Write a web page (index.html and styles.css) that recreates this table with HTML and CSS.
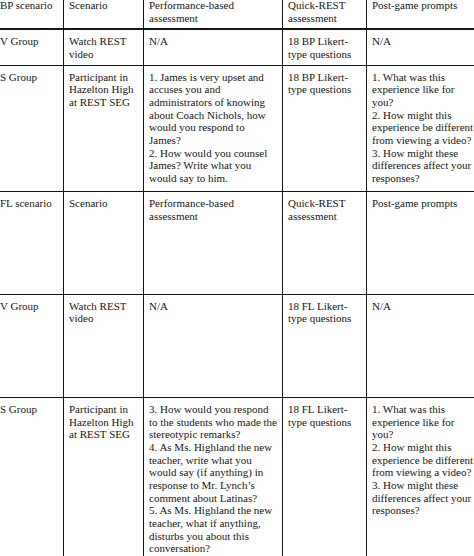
FILE: index.html
```html
<!DOCTYPE html>
<html>
<head>
<meta charset="utf-8">
<link rel="stylesheet" href="styles.css">
</head>
<body>
<div class="page">
<table class="grid">
  <colgroup>
    <col class="c1"><col class="c2"><col class="c3"><col class="c4"><col class="c5">
  </colgroup>
  <tr class="head">
    <td>BP scenario</td>
    <td>Scenario</td>
    <td>Performance-based assessment</td>
    <td>Quick-REST assessment</td>
    <td>Post-game prompts</td>
  </tr>
  <tr class="r-short">
    <td>V Group</td>
    <td>Watch REST video</td>
    <td>N/A</td>
    <td>18 BP Likert-type questions</td>
    <td>N/A</td>
  </tr>
  <tr class="r-long">
    <td>S Group</td>
    <td>Participant in Hazelton High at REST SEG</td>
    <td>1. James is very upset and accuses you and administrators of knowing about Coach Nichols, how would you respond to James?<br>2. How would you counsel James? Write what you would say to him.</td>
    <td>18 BP Likert-type questions</td>
    <td>1. What was this experience like for you?<br>2. How might this experience be different from viewing a video?<br>3. How might these differences affect your responses?</td>
  </tr>
  <tr class="r-mid">
    <td>FL scenario</td>
    <td>Scenario</td>
    <td>Performance-based assessment</td>
    <td>Quick-REST assessment</td>
    <td>Post-game prompts</td>
  </tr>
  <tr class="r-mid2">
    <td>V Group</td>
    <td>Watch REST video</td>
    <td>N/A</td>
    <td>18 FL Likert-type questions</td>
    <td>N/A</td>
  </tr>
  <tr class="r-last">
    <td>S Group</td>
    <td>Participant in Hazelton High at REST SEG</td>
    <td>3. How would you respond to the students who made the stereotypic remarks?<br>4. As Ms. Highland the new teacher, write what you would say (if anything) in response to Mr. Lynch’s comment about Latinas?<br>5. As Ms. Highland the new teacher, what if anything, disturbs you about this conversation?</td>
    <td>18 FL Likert-type questions</td>
    <td>1. What was this experience like for you?<br>2. How might this experience be different from viewing a video?<br>3. How might these differences affect your responses?</td>
  </tr>
</table>
</div>
</body>
</html>
```

FILE: styles.css
```css
html, body {
  margin: 0;
  padding: 0;
  background: #ffffff;
}

.page {
  width: 474px;
  height: 556px;
  overflow: hidden;
  position: relative;
  background: #ffffff;
}

.grid {
  border-collapse: collapse;
  table-layout: fixed;
  width: 488px;
  margin-top: -7px;
  margin-left: -6px;
  font-family: "Liberation Serif", "Times New Roman", serif;
  font-size: 11px;
  line-height: 12.67px;
  color: #161616;
}

.c1 { width: 69px; }
.c2 { width: 80px; }
.c3 { width: 139px; }
.c4 { width: 84px; }
.c5 { width: 116px; }

.grid td {
  border: 1px solid #161616;
  padding: 5px 5px 4px 5px;
  vertical-align: top;
  text-align: left;
}

.head td {
  border-bottom: 2px solid #161616;
  height: 25px;
}

.r-short td { height: 25px; }
.r-long td { height: 116.5px; }
.r-mid td { height: 92.5px; }
.r-mid2 td { height: 93.3px; }
.r-last td { height: 160px; }
```
